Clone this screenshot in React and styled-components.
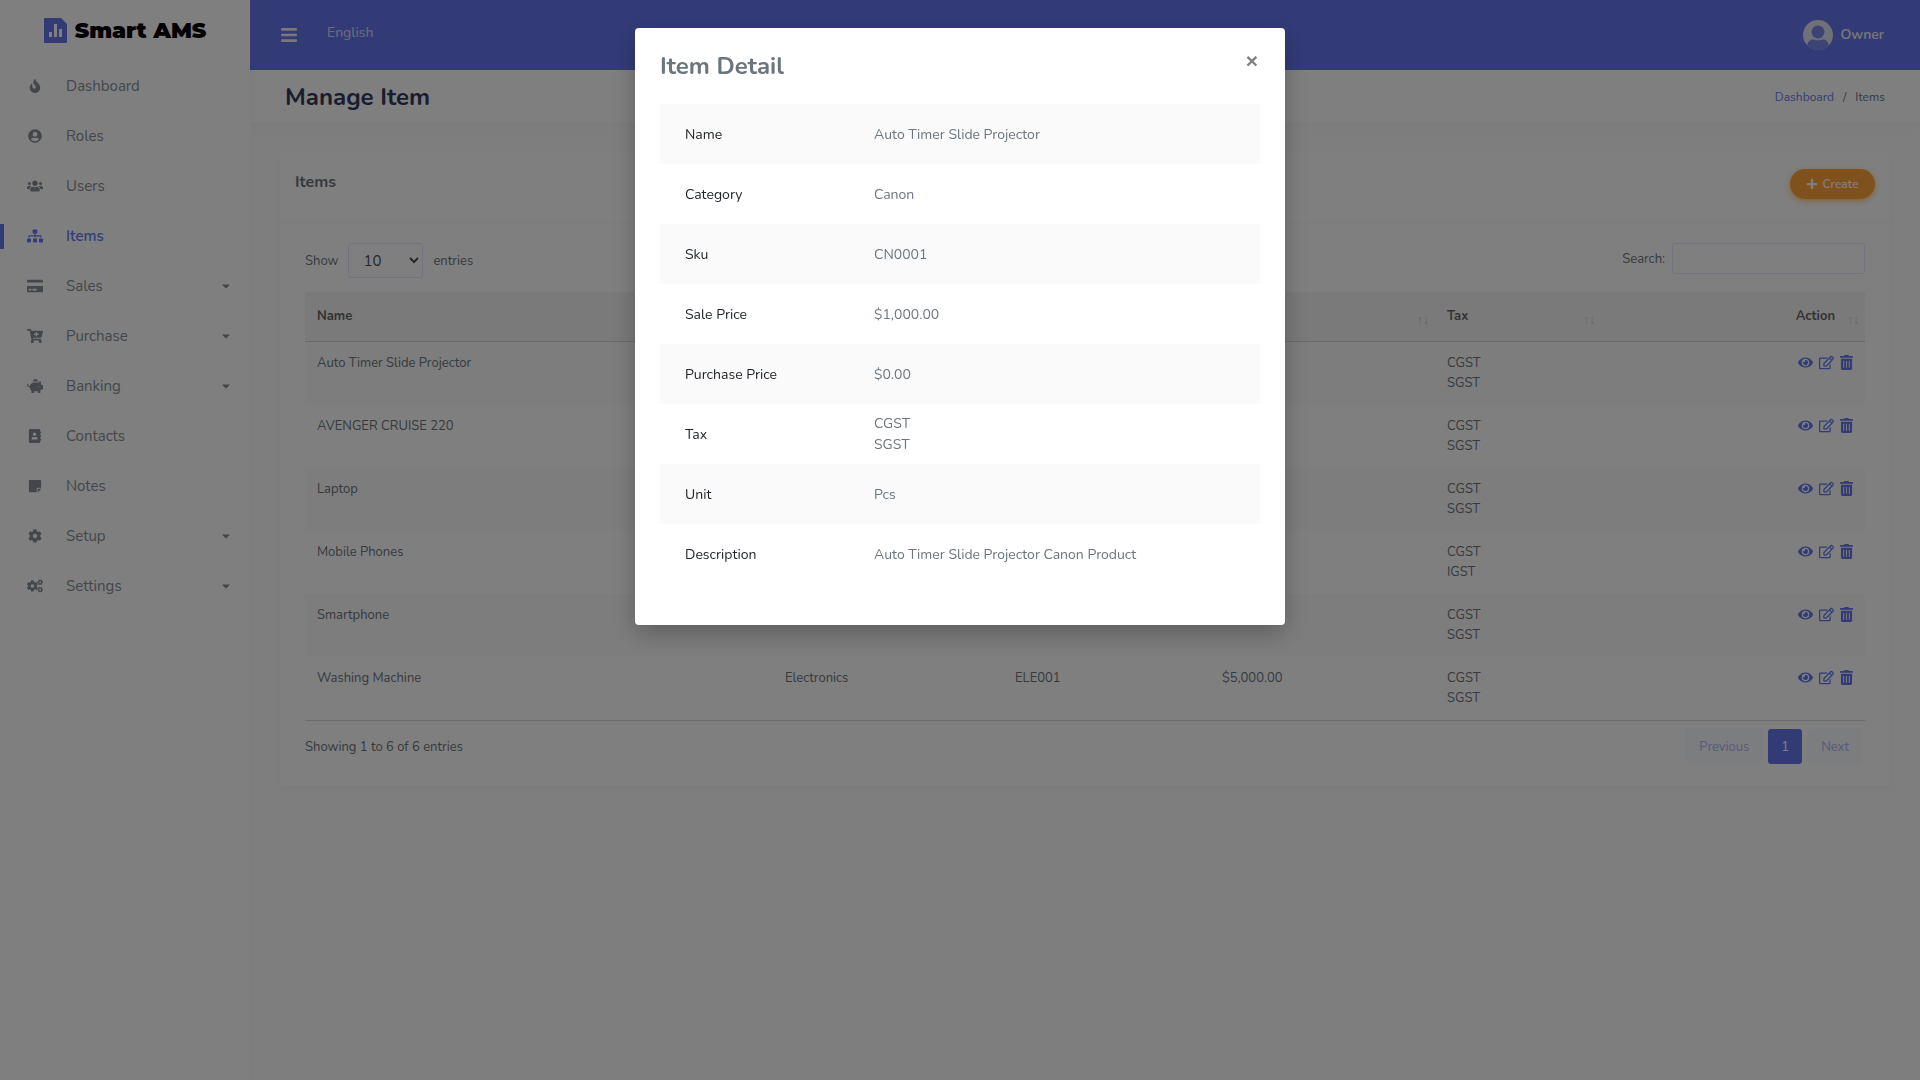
import React from 'react';
import styled, { createGlobalStyle, css } from 'styled-components';
import {
  FaFire, FaUserCircle, FaUsers, FaSitemap, FaCreditCard, FaCartPlus, FaPiggyBank,
  FaAddressBook, FaStickyNote, FaCog, FaCogs, FaCaretDown, FaBars, FaPlus, FaEye,
  FaRegEdit, FaTrashAlt,
} from 'react-icons/fa';

const Global = createGlobalStyle`
  *, *::before, *::after { box-sizing: border-box; }
  body {
    margin: 0;
    background: #fdfdfd;
    color: #6c757d;
    font-family: Nunito, Lato, "Liberation Sans", sans-serif;
    font-size: 13px;
    line-height: 20px;
  }
  button, input, select { font: inherit; color: inherit; }
  button { border: 0; background: none; padding: 0; cursor: pointer; }
  a { color: inherit; text-decoration: none; }
`;

const Shell = styled.div`
  display: flex;
  min-height: 100vh;
`;

const Sidebar = styled.aside`
  flex: 0 0 250px;
  background: #fff;
  box-shadow: 0 4px 8px rgba(0, 0, 0, 0.03);
  z-index: 1;
`;

const Brand = styled.a`
  display: flex;
  align-items: center;
  justify-content: center;
  gap: 8px;
  height: 61px;
  color: #000;
  font-family: Montserrat, Inter, "Liberation Sans", sans-serif;
  font-size: 22px;
  font-weight: 900;
  svg { display: block; }
`;

const Menu = styled.ul`
  list-style: none;
  margin: 0;
  padding: 0;
`;

const MenuLink = styled.a`
  display: flex;
  align-items: center;
  height: 50px;
  padding: 0 18px 0 26px;
  position: relative;
  font-size: 15px;
  color: ${(p) => (p.$active ? '#6777ef' : '#868e96')};
  font-weight: ${(p) => (p.$active ? 600 : 400)};
  ${(p) => p.$active && css`
    &::before {
      content: '';
      position: absolute;
      left: 0;
      width: 4px;
      height: 25px;
      background: #6777ef;
    }
  `}
`;

const MenuIcon = styled.span`
  display: flex;
  justify-content: center;
  width: 18px;
  margin-right: 22px;
  font-size: ${(p) => (p.$wide ? 16 : 14)}px;
  color: ${(p) => (p.$active ? '#6777ef' : '#868e96')};
`;

const Caret = styled(FaCaretDown)`
  margin-left: auto;
  width: 12px;
  height: 12px;
`;

const Main = styled.div`
  flex: 1;
  min-width: 0;
`;

const Topbar = styled.header`
  display: flex;
  align-items: center;
  height: 70px;
  padding: 0 36px 0 30px;
  background: #6777ef;
  color: #f2f2f2;
  font-size: 14px;
`;

const MenuToggle = styled.button`
  display: flex;
  font-size: 18px;
`;

const Language = styled.a`
  margin: 0 auto 4px 29px;
  color: #d8dbf8;
`;

const Profile = styled.button`
  display: flex;
  align-items: center;
  gap: 8px;
  font-weight: 600;
  svg { display: block; }
`;

const PageHead = styled.div`
  display: flex;
  align-items: center;
  justify-content: space-between;
  height: 53px;
  padding: 1px 35px 0;
  background: #fff;
  box-shadow: 0 4px 8px rgba(0, 0, 0, 0.03);
`;

const PageTitle = styled.h1`
  margin: 0;
  font-size: 24px;
  line-height: 28px;
  color: #34395e;
`;

const Crumbs = styled.nav`
  display: flex;
  gap: 9px;
  font-size: 12px;
  a { color: #6777ef; }
`;

const Card = styled.section`
  margin: 30px;
  background: #fff;
  border-radius: 3px;
  box-shadow: 0 4px 8px rgba(0, 0, 0, 0.03);
`;

const CardHead = styled.div`
  display: flex;
  justify-content: space-between;
  align-items: flex-start;
  height: 70px;
  padding: 16px 15px;
  border-bottom: 1px solid #f9f9f9;
`;

const CardTitle = styled.h2`
  margin: 0;
  font-size: 16px;
  line-height: 26px;
`;

const CreateButton = styled.button`
  display: flex;
  align-items: center;
  justify-content: center;
  gap: 4px;
  width: 85px;
  height: 30px;
  border-radius: 30px;
  background: #ffa43b;
  box-shadow: 0 2px 6px #ffc473;
  color: #fff;
  font-size: 12px;
  font-weight: 600;
`;

const CardBody = styled.div`
  padding: 20px 25px 22px;
`;

const Controls = styled.div`
  display: flex;
  justify-content: space-between;
  align-items: flex-start;
  height: 49px;
`;

const ControlLabel = styled.label`
  display: flex;
  align-items: center;
  gap: ${(p) => p.$gap}px;
`;

const field = css`
  background: #fff;
  border: 1px solid #e4e6fc;
  border-radius: 3px;
`;

const Length = styled.select`
  ${field}
  width: 75px;
  height: 35px;
  padding: 0 0 0 10px;
  font-size: 15px;
  color: #495057;
`;

const Search = styled.input`
  ${field}
  width: 193px;
  height: 31px;
  padding: 0 8px;
`;

const Table = styled.table`
  width: 100%;
  table-layout: fixed;
  border-collapse: separate;
  border-spacing: 0;
  border-bottom: 1px solid #d6d6d6;
  tbody tr:nth-child(odd) { background: #fafafa; }
`;

const Th = styled.th`
  width: ${(p) => p.$width || 'auto'};
  height: 50px;
  padding: 0 12px 2px;
  background: #f4f4f4;
  border-bottom: 1px solid #d6d6d6;
  color: #666;
  font-weight: 700;
`;

const HeadCell = styled.span`
  display: flex;
  align-items: center;
  justify-content: ${(p) => (p.$right ? 'flex-end' : 'space-between')};
  gap: 12px;
  margin-right: -6px;
`;

const Arrows = styled.span`
  padding-top: 8px;
  color: #c8c8c8;
  font-family: "Liberation Sans", sans-serif;
  font-size: 12px;
  font-weight: 400;
  line-height: 12px;
`;

const Td = styled.td`
  height: 63px;
  padding: 11px 12px 12px;
  vertical-align: top;
`;

const Actions = styled.div`
  display: flex;
  justify-content: flex-end;
  align-items: center;
  gap: 6px;
  height: 18px;
  color: #6777ef;
  font-size: 15px;
  button { display: flex; }
  button:last-child svg { width: 13px; }
`;

const Foot = styled.div`
  display: flex;
  justify-content: space-between;
  align-items: center;
  padding: 8px 3px 0 0;
`;

const Pager = styled.nav`
  display: flex;
  gap: 6px;
`;

const PageButton = styled.button`
  height: 35px;
  padding: 0 13px;
  border-radius: 3px;
  background: ${(p) => (p.$current ? '#6777ef' : '#f9fafe')};
  color: ${(p) => (p.$current ? '#fff' : '#aeb6f4')};
`;

const Backdrop = styled.div`
  position: fixed;
  inset: 0;
  z-index: 10;
  display: flex;
  justify-content: center;
  align-items: flex-start;
  padding: 28px;
  background: rgba(0, 0, 0, 0.5);
`;

const Dialog = styled.div`
  width: 100%;
  max-width: 650px;
  padding: 25px 25px 41px;
  background: #fff;
  border-radius: 4px;
  box-shadow: 0 8px 24px rgba(0, 0, 0, 0.25);
`;

const DialogHead = styled.div`
  display: flex;
  justify-content: space-between;
  align-items: flex-start;
  height: 51px;
`;

const DialogTitle = styled.h2`
  margin: 0;
  font-size: 24px;
  font-weight: 700;
  line-height: 26px;
`;

const Close = styled.button`
  width: 16px;
  color: #7f7f7f;
  font-family: "Liberation Sans", sans-serif;
  font-size: 21px;
  font-weight: 700;
  line-height: 16px;
`;

const Details = styled.table`
  width: 100%;
  table-layout: fixed;
  border-collapse: collapse;
  font-size: 14px;
  line-height: 21px;
  tr { height: 60px; }
  tr:nth-child(odd) { background: #fafafa; }
  th {
    width: 214px;
    padding: 0 25px;
    color: #212529;
    font-weight: 400;
    text-align: left;
  }
  td { padding: 0; }
`;

const menu = [
  { label: 'Dashboard', icon: FaFire },
  { label: 'Roles', icon: FaUserCircle },
  { label: 'Users', icon: FaUsers, wide: true },
  { label: 'Items', icon: FaSitemap, wide: true, active: true },
  { label: 'Sales', icon: FaCreditCard, wide: true, sub: true },
  { label: 'Purchase', icon: FaCartPlus, wide: true, sub: true },
  { label: 'Banking', icon: FaPiggyBank, wide: true, sub: true },
  { label: 'Contacts', icon: FaAddressBook },
  { label: 'Notes', icon: FaStickyNote },
  { label: 'Setup', icon: FaCog, sub: true },
  { label: 'Settings', icon: FaCogs, wide: true, sub: true },
];

const items = [
  { name: 'Auto Timer Slide Projector', category: 'Canon', sku: 'CN0001', price: '$1,000.00', tax: ['CGST', 'SGST'] },
  { name: 'AVENGER CRUISE 220', tax: ['CGST', 'SGST'] },
  { name: 'Laptop', tax: ['CGST', 'SGST'] },
  { name: 'Mobile Phones', tax: ['CGST', 'IGST'] },
  { name: 'Smartphone', tax: ['CGST', 'SGST'] },
  { name: 'Washing Machine', category: 'Electronics', sku: 'ELE001', price: '$5,000.00', tax: ['CGST', 'SGST'] },
];

const columns = [
  { label: 'Name' },
  { label: 'Category', width: '230px' },
  { label: 'Sku', width: '207px' },
  { label: 'Sale Price', width: '225px' },
  { label: 'Tax', width: '166px' },
  { label: 'Action', width: '264px', right: true },
];

const details = [
  ['Name', ['Auto Timer Slide Projector']],
  ['Category', ['Canon']],
  ['Sku', ['CN0001']],
  ['Sale Price', ['$1,000.00']],
  ['Purchase Price', ['$0.00']],
  ['Tax', ['CGST', 'SGST']],
  ['Unit', ['Pcs']],
  ['Description', ['Auto Timer Slide Projector Canon Product']],
];

const Logo = () => (
  <svg width="23" height="25" viewBox="0 0 23 25" aria-hidden="true">
    <path d="M1 0h16l6 6v18a1 1 0 0 1-1 1H1a1 1 0 0 1-1-1V1a1 1 0 0 1 1-1z" fill="#6777ef" />
    <path d="M5 14h3v5H5zM10 6h3v13h-3zM15 11h3v8h-3z" fill="#fff" />
  </svg>
);

const Avatar = () => (
  <svg width="30" height="30" viewBox="0 0 30 30" aria-hidden="true">
    <clipPath id="avatar"><circle cx="15" cy="15" r="15" /></clipPath>
    <g clipPath="url(#avatar)">
      <rect width="30" height="30" fill="#dfe3f5" />
      <circle cx="15" cy="12" r="6.5" fill="#7b88ea" />
      <path d="M4 27c0-5 3-7.500 6-7.500 2 0 3 1 5 1s3-1 5-1c3 0 6 2.500 6 7.500v3H4z" fill="#7b88ea" />
    </g>
  </svg>
);

export default function App() {
  return (
    <>
      <Global />
      <Shell>
        <Sidebar>
          <Brand href="#"><Logo />Smart AMS</Brand>
          <Menu>
            {menu.map(({ label, icon: Icon, wide, active, sub }) => (
              <li key={label}>
                <MenuLink href="#" $active={active}>
                  <MenuIcon $wide={wide} $active={active}><Icon /></MenuIcon>
                  {label}
                  {sub && <Caret />}
                </MenuLink>
              </li>
            ))}
          </Menu>
        </Sidebar>
        <Main>
          <Topbar>
            <MenuToggle aria-label="Toggle menu"><FaBars /></MenuToggle>
            <Language href="#">English</Language>
            <Profile><Avatar />Owner</Profile>
          </Topbar>
          <PageHead>
            <PageTitle>Manage Item</PageTitle>
            <Crumbs><a href="#">Dashboard</a><span>/</span><span>Items</span></Crumbs>
          </PageHead>
          <Card>
            <CardHead>
              <CardTitle>Items</CardTitle>
              <CreateButton><FaPlus />Create</CreateButton>
            </CardHead>
            <CardBody>
              <Controls>
                <ControlLabel $gap={10}>Show
                  <Length defaultValue="10"><option>10</option></Length>
                  entries
                </ControlLabel>
                <ControlLabel $gap={7}>Search:<Search type="search" /></ControlLabel>
              </Controls>
              <Table>
                <thead>
                  <tr>
                    {columns.map((c) => (
                      <Th key={c.label} $width={c.width}>
                        <HeadCell $right={c.right}>{c.label}<Arrows aria-hidden="true">↑↓</Arrows></HeadCell>
                      </Th>
                    ))}
                  </tr>
                </thead>
                <tbody>
                  {items.map((it) => (
                    <tr key={it.name}>
                      <Td>{it.name}</Td>
                      <Td>{it.category}</Td>
                      <Td>{it.sku}</Td>
                      <Td>{it.price}</Td>
                      <Td>{it.tax.map((t) => <div key={t}>{t}</div>)}</Td>
                      <Td>
                        <Actions>
                          <button aria-label="View"><FaEye /></button>
                          <button aria-label="Edit"><FaRegEdit /></button>
                          <button aria-label="Delete"><FaTrashAlt /></button>
                        </Actions>
                      </Td>
                    </tr>
                  ))}
                </tbody>
              </Table>
              <Foot>
                <span>Showing 1 to 6 of 6 entries</span>
                <Pager>
                  <PageButton>Previous</PageButton>
                  <PageButton $current>1</PageButton>
                  <PageButton>Next</PageButton>
                </Pager>
              </Foot>
            </CardBody>
          </Card>
        </Main>
      </Shell>
      <Backdrop>
        <Dialog role="dialog" aria-modal="true" aria-labelledby="detail-title">
          <DialogHead>
            <DialogTitle id="detail-title">Item Detail</DialogTitle>
            <Close aria-label="Close">×</Close>
          </DialogHead>
          <Details>
            <tbody>
              {details.map(([label, lines]) => (
                <tr key={label}>
                  <th scope="row">{label}</th>
                  <td>{lines.map((l) => <div key={l}>{l}</div>)}</td>
                </tr>
              ))}
            </tbody>
          </Details>
        </Dialog>
      </Backdrop>
    </>
  );
}
